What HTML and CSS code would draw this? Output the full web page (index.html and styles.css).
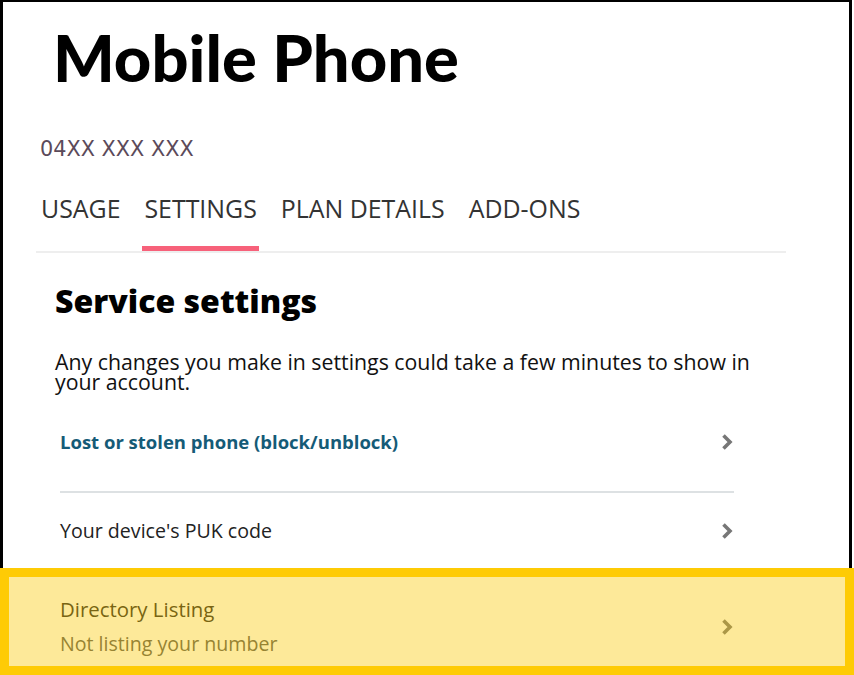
FILE: index.html
```html
<!DOCTYPE html>
<html lang="en">
<head>
<meta charset="utf-8">
<title>Mobile Phone</title>
<link rel="stylesheet" href="styles.css">
</head>
<body>
<div class="frame">
  <header class="page-head">
    <h1 class="title">Mobile Phone</h1>
    <div class="number">04XX XXX XXX</div>
  </header>
  <nav class="tabs">
    <a class="tab">USAGE</a>
    <a class="tab active">SETTINGS</a>
    <a class="tab">PLAN DETAILS</a>
    <a class="tab">ADD-ONS</a>
  </nav>
  <section class="settings">
    <h2 class="section-title">Service settings</h2>
    <p class="intro">Any changes you make in settings could take a few minutes to show in your account.</p>
    <ul class="list">
      <li class="item link">
        <span class="item-text">Lost or stolen phone (block/unblock)</span>
        <svg class="chev" viewBox="0 0 12 16" width="12" height="16"><polyline points="2.5,1.5 9,8 2.5,14.5" fill="none" stroke="currentColor" stroke-width="3.6"/></svg>
      </li>
      <li class="item plain">
        <span class="item-text">Your device's PUK code</span>
        <svg class="chev" viewBox="0 0 12 16" width="12" height="16"><polyline points="2.5,1.5 9,8 2.5,14.5" fill="none" stroke="currentColor" stroke-width="3.6"/></svg>
      </li>
      <li class="item double">
        <span class="item-body">
          <span class="item-text dir">Directory Listing</span>
          <span class="item-sub">Not listing your number</span>
        </span>
        <svg class="chev" viewBox="0 0 12 16" width="12" height="16"><polyline points="2.5,1.5 9,8 2.5,14.5" fill="none" stroke="currentColor" stroke-width="3.6"/></svg>
      </li>
    </ul>
  </section>
</div>
<div class="highlight"></div>
</body>
</html>
```

FILE: styles.css
```css
* { box-sizing: border-box; }
html, body { margin: 0; padding: 0; background: #fff; }
body {
  width: 854px;
  height: 675px;
  overflow: hidden;
  position: relative;
  font-family: "Open Sans", "Noto Sans", sans-serif;
  color: #222;
}
.frame {
  width: 852px;
  height: 675px;
  border-top: 2px solid #000;
  border-left: 3px solid #000;
  border-right: 3px solid #000;
  padding-left: 33px;
}
.page-head { padding-left: 4px; }
.title {
  margin: 0;
  padding-left: 13px;
  padding-top: 15px;
  font-family: "Lato", sans-serif;
  font-size: 65px;
  font-weight: 900;
  line-height: 80px;
  color: #000;
}
.number {
  margin-top: 40px;
  font-family: "DejaVu Sans", sans-serif;
  font-size: 20.8px;
  line-height: 24px;
  color: #5b4a5a;
}
.tabs {
  display: flex;
  gap: 20px;
  width: 750px;
  margin-top: 33px;
  padding-left: 3px;
  border-bottom: 2px solid #eeeeee;
}
.tab {
  display: block;
  font-size: 24.9px;
  line-height: 28px;
  color: #333;
  padding: 0 2px 24px;
  border-bottom: 5px solid transparent;
}
.tab.active { border-bottom-color: #f7617a; }
.settings { padding-left: 19px; width: 740px; }
.section-title {
  margin: 30px 0 0;
  font-size: 32px;
  font-weight: 800;
  line-height: 36px;
  color: #000;
}
.intro {
  margin: 33px 0 0;
  font-size: 21.3px;
  line-height: 20px;
  color: #111;
}
.list {
  list-style: none;
  margin: 0;
  padding: 0 0 0 5px;
  width: 679px;
}
.item {
  display: flex;
  align-items: center;
  justify-content: space-between;
  padding: 0 1px 0 0;
  font-size: 19.6px;
}
.item.link {
  color: #155b77;
  font-weight: 700;
  font-size: 18.5px;
  height: 101px;
  border-bottom: 2px solid #dde1e3;
}
.item.plain { height: 75px; }
.item.double { height: 117px; }
.item-body { display: flex; flex-direction: column; gap: 13px; }
.item-text { line-height: 22px; }
.item-text.dir { font-size: 20.4px; }
.item-sub { line-height: 22px; color: #555; }
.chev { color: #777; flex: none; }
.highlight {
  position: absolute;
  left: 0;
  top: 568px;
  width: 854px;
  height: 107px;
  border: 9px solid #fecb05;
  background: rgba(250, 200, 0, 0.4);
}
```
